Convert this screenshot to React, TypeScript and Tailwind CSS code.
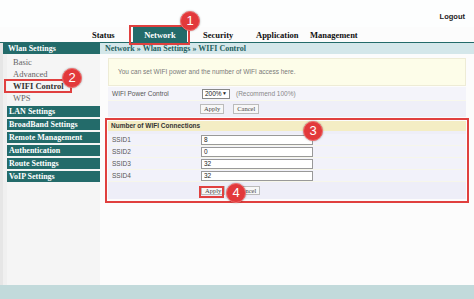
import React from "react";

const serif = { fontFamily: '"Liberation Serif", "Times New Roman", serif' };
const sans = { fontFamily: '"Liberation Sans", Arial, sans-serif' };

function Badge({ n, x, y }: { n: number; x: number; y: number }) {
  return (
    <div
      className="absolute w-[20px] h-[20px] rounded-full bg-[#e2393b] text-white flex items-center justify-center text-[13px] shadow-[0_0_2px_rgba(0,0,0,0.35)] border border-[#f07070]"
      style={{ left: x - 10, top: y - 10, ...sans }}
    >
      {n}
    </div>
  );
}

function Box({ x, y, w, h }: { x: number; y: number; w: number; h: number }) {
  return (
    <div
      className="absolute border-2 border-[#e0403f]"
      style={{ left: x, top: y, width: w, height: h }}
    />
  );
}

export default function App() {
  const sideBars = [
    "LAN Settings",
    "BroadBand Settings",
    "Remote Management",
    "Authentication",
    "Route Settings",
    "VoIP Settings",
  ];
  const ssids = [
    ["SSID1", "8"],
    ["SSID2", "0"],
    ["SSID3", "32"],
    ["SSID4", "32"],
  ];
  return (
    <div className="relative w-[474px] h-[299px] overflow-hidden bg-[#fcfcfc] flex flex-col">
      {/* top */}
      <div className="h-[27px] flex justify-end items-start bg-[#fdfefe]">
        <span className="mt-[11px] mr-[9px] text-[7.5px] font-bold text-[#222]" style={sans}>
          Logout
        </span>
      </div>
      {/* nav */}
      <div className="h-[15px] flex items-stretch pl-[92px] text-[8.5px] font-bold text-[#111]" style={serif}>
        <div className="w-[41px] flex items-center pt-[1px]">Status</div>
        <div className="w-[54px] bg-[#236b6a] text-white flex items-center justify-center pt-[1px]">Network</div>
        <div className="w-[16px]" />
        <div className="w-[53px] flex items-center pt-[1px]">Security</div>
        <div className="w-[54px] flex items-center pt-[1px]">Application</div>
        <div className="flex items-center pt-[1px]">Management</div>
      </div>
      <div className="h-[1px] bg-[#236b6a]" />
      {/* main */}
      <div className="flex flex-1">
        <div className="w-[3px] bg-[#e6e6e6]" />
        <div className="w-[4px] bg-[#f0f0f0]" />
        {/* sidebar */}
        <div className="w-[93px] bg-[#f5f5f5] flex flex-col">
          <div className="h-[11px] -ml-[4px] bg-[#236b6a] text-white text-[8px] font-bold flex items-center pl-[5px]" style={serif}>
            Wlan Settings
          </div>
          <div className="pt-[2px] flex flex-col text-[8.5px] text-[#666]" style={serif}>
            <div className="h-[12px] flex items-center pl-[6px]">Basic</div>
            <div className="h-[12px] flex items-center pl-[6px]">Advanced</div>
            <div className="h-[12px] flex items-center pl-[6px] font-bold text-[#333]">WIFI Control</div>
            <div className="h-[12px] flex items-center pl-[6px]">WPS</div>
          </div>
          <div className="mt-[2px] flex flex-col gap-[2px]">
            {sideBars.map((s) => (
              <div
                key={s}
                className="h-[11px] bg-[#236b6a] text-white text-[8px] font-bold flex items-center pl-[2px]"
                style={serif}
              >
                {s}
              </div>
            ))}
          </div>
        </div>
        {/* content */}
        <div className="flex-1 flex flex-col bg-[#fcfcfc]">
          <div className="h-[11px] bg-[#d4e7ea] text-[#1f5f60] text-[8px] font-bold flex items-center pl-[5px]" style={serif}>
            Network » Wlan Settings » WIFI Control
          </div>
          <div className="ml-[8px] w-[358px] flex flex-col" style={sans}>
            <div className="mt-[4px] h-[28px] bg-[#fdfde9] border border-[#eeecd6] flex items-center pl-[9px] text-[6.5px] text-[#7a7a7a]">
              You can set WIFI power and the number of WIFI access here.
            </div>
            <div className="mt-[1px] h-[14px] bg-[#f4f4fa] border-b border-[#f8f8ec] flex items-center text-[6.5px] text-[#555]">
              <div className="w-[94px] pl-[4px]">WIFI Power Control</div>
              <div className="h-[10px] w-[28px] border border-[#888] bg-white flex items-center justify-between px-[2px] text-[6.5px] text-[#222]">
                <span>200%</span>
                <span className="text-[5px]">▼</span>
              </div>
              <div className="ml-[6px] text-[#888]">(Recommend 100%)</div>
            </div>
            <div className="h-[16px] bg-[#efeff8] flex items-center pl-[92px] gap-[9px] text-[6.5px] text-[#444]" style={serif}>
              <div className="h-[10px] px-[3px] border border-[#bbb] bg-[#f7f7f7] flex items-center">Apply</div>
              <div className="h-[10px] px-[3px] border border-[#bbb] bg-[#f7f7f7] flex items-center">Cancel</div>
            </div>
            <div className="mt-[4px] flex flex-col bg-[#eeeef8]">
              <div className="h-[10px] bg-[#f4edc4] flex items-center pl-[3px] text-[6.5px] font-bold text-[#333]">
                Number of WIFI Connections
              </div>
              <div className="h-[3px]" />
              {ssids.map(([l, v]) => (
                <div key={l} className="h-[12px] flex items-center border-b border-[#f6f6ea] text-[6.5px] text-[#555] bg-[#f2f2fa]">
                  <div className="w-[93px] pl-[4px]">{l}</div>
                  <div className="h-[10px] w-[112px] border border-[#999] bg-white flex items-center pl-[2px] text-[#222]">{v}</div>
                </div>
              ))}
              <div className="h-[17px] flex items-center pl-[93px] gap-[9px] text-[6.5px] text-[#444]" style={serif}>
                <div className="h-[9px] px-[3px] border border-[#bbb] bg-[#f7f7f7] flex items-center">Apply</div>
                <div className="h-[9px] px-[3px] border border-[#bbb] bg-[#f7f7f7] flex items-center">Cancel</div>
              </div>
            </div>
          </div>
        </div>
      </div>
      <div className="h-[14px] bg-[#c2dadb]" />

      {/* annotations */}
      <Box x={129} y={25} w={61} h={20} />
      <Box x={4} y={79} w={68} h={14} />
      <Box x={105} y={118} w={364} h={85} />
      <Box x={199} y={186} w={25} h={12} />
      <Badge n={1} x={190} y={21} />
      <Badge n={2} x={72} y={78} />
      <Badge n={3} x={313} y={131} />
      <Badge n={4} x={236} y={193} />
    </div>
  );
}
